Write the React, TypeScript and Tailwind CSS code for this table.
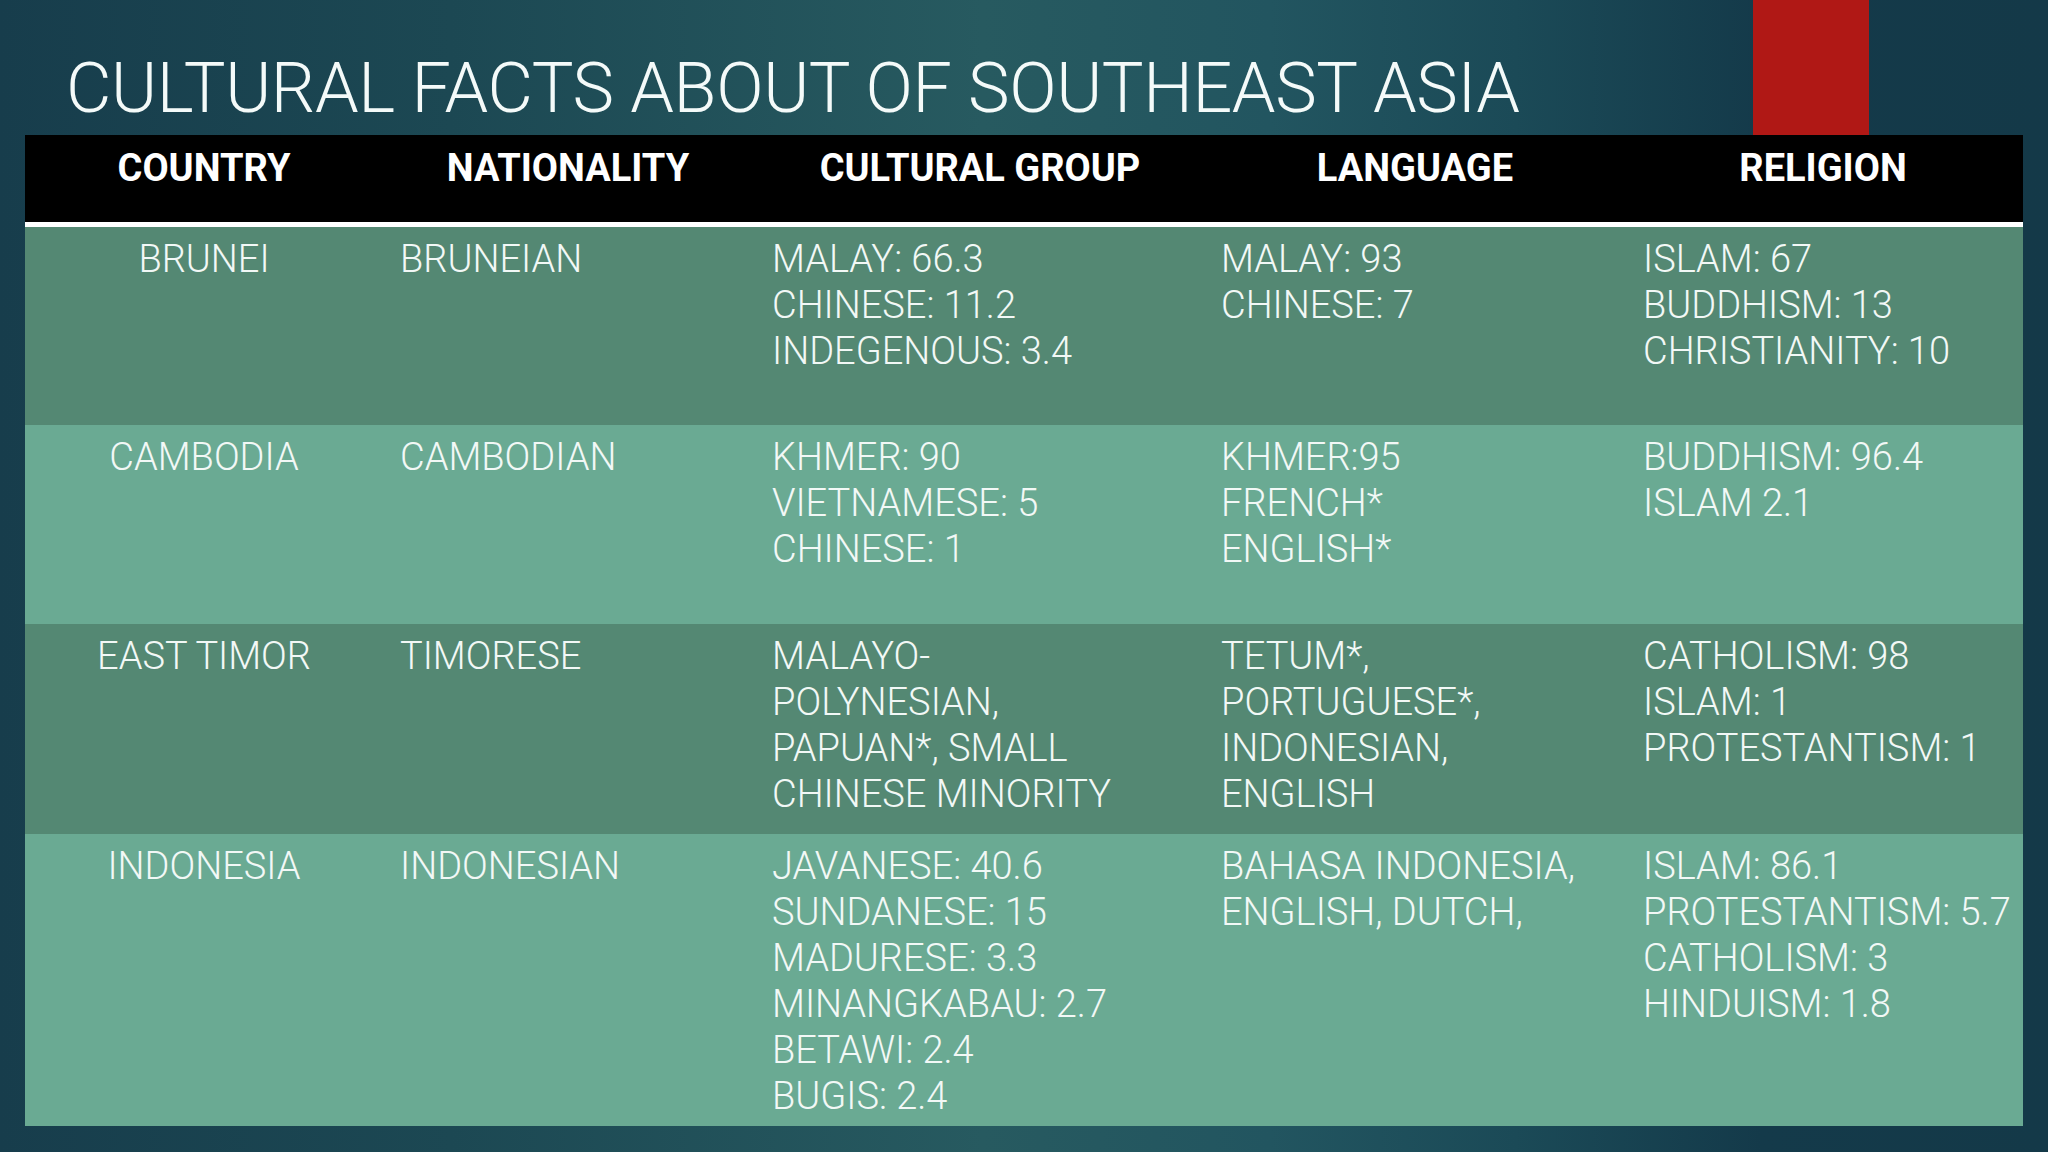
import React from "react";

type Row = {
  country: string;
  nationality: string;
  cultural: string[];
  language: string[];
  religion: string[];
  bg: string;
  h: string;
};

const rows: Row[] = [
  {
    country: "BRUNEI",
    nationality: "BRUNEIAN",
    cultural: ["MALAY: 66.3", "CHINESE: 11.2", "INDEGENOUS: 3.4"],
    language: ["MALAY: 93", "CHINESE: 7"],
    religion: ["ISLAM: 67", "BUDDHISM: 13", "CHRISTIANITY: 10"],
    bg: "bg-[#548873]",
    h: "h-[198px]",
  },
  {
    country: "CAMBODIA",
    nationality: "CAMBODIAN",
    cultural: ["KHMER: 90", "VIETNAMESE: 5", "CHINESE: 1"],
    language: ["KHMER:95", "FRENCH*", "ENGLISH*"],
    religion: ["BUDDHISM: 96.4", "ISLAM 2.1"],
    bg: "bg-[#6aaa93]",
    h: "h-[199px]",
  },
  {
    country: "EAST TIMOR",
    nationality: "TIMORESE",
    cultural: ["MALAYO-", "POLYNESIAN,", "PAPUAN*, SMALL", "CHINESE MINORITY"],
    language: ["TETUM*,", "PORTUGUESE*,", "INDONESIAN,", "ENGLISH"],
    religion: ["CATHOLISM: 98", "ISLAM: 1", "PROTESTANTISM: 1"],
    bg: "bg-[#548873]",
    h: "h-[210px]",
  },
  {
    country: "INDONESIA",
    nationality: "INDONESIAN",
    cultural: [
      "JAVANESE: 40.6",
      "SUNDANESE: 15",
      "MADURESE: 3.3",
      "MINANGKABAU: 2.7",
      "BETAWI: 2.4",
      "BUGIS: 2.4",
    ],
    language: ["BAHASA INDONESIA,", "ENGLISH, DUTCH,"],
    religion: ["ISLAM: 86.1", "PROTESTANTISM: 5.7", "CATHOLISM: 3", "HINDUISM: 1.8"],
    bg: "bg-[#6aaa93]",
    h: "h-[292px]",
  },
];

const Lines = ({ items }: { items: string[] }) => (
  <>
    {items.map((t, i) => (
      <div key={i} className="whitespace-nowrap">
        {t}
      </div>
    ))}
  </>
);

export default function App() {
  return (
    <div
      className="w-[2048px] h-[1152px] overflow-hidden relative bg-[linear-gradient(90deg,#173d4c_0%,#1c4853_22%,#275a60_48%,#225560_62%,#1b4a57_74%,#143a4a_86%,#143948_100%)] text-[#f2f8f6]"
      style={{ fontFamily: "Roboto, 'Liberation Sans', sans-serif" }}
    >
      <div className="absolute left-[1753px] top-0 w-[116px] h-[135px] bg-[#b01815]" />
      <div className="h-[135px] pl-[66px] pt-[48px]">
        <h1 className="text-[70px] leading-[80px] font-light tracking-[-0.4px] text-[#f4faf9] whitespace-nowrap">
          CULTURAL FACTS ABOUT OF SOUTHEAST ASIA
        </h1>
      </div>
      <div className="ml-[25px] w-[1998px]">
        <div className="grid grid-cols-[358px_370px_454px_416px_400px] h-[87px] bg-black text-white font-bold text-[38px] leading-[46px] pt-[10px] text-center">
          <div>COUNTRY</div>
          <div>NATIONALITY</div>
          <div>CULTURAL GROUP</div>
          <div>LANGUAGE</div>
          <div>RELIGION</div>
        </div>
        <div className="h-[5px] bg-white" />
        {rows.map((r) => (
          <div
            key={r.country}
            className={`grid grid-cols-[358px_370px_454px_416px_400px] ${r.bg} ${r.h} text-[38px] leading-[46px] font-light pt-[9px]`}
          >
            <div className="text-center">{r.country}</div>
            <div className="pl-[17px]">{r.nationality}</div>
            <div className="pl-[19px]">
              <Lines items={r.cultural} />
            </div>
            <div className="pl-[14px]">
              <Lines items={r.language} />
            </div>
            <div className="pl-[20px]">
              <Lines items={r.religion} />
            </div>
          </div>
        ))}
      </div>
    </div>
  );
}
